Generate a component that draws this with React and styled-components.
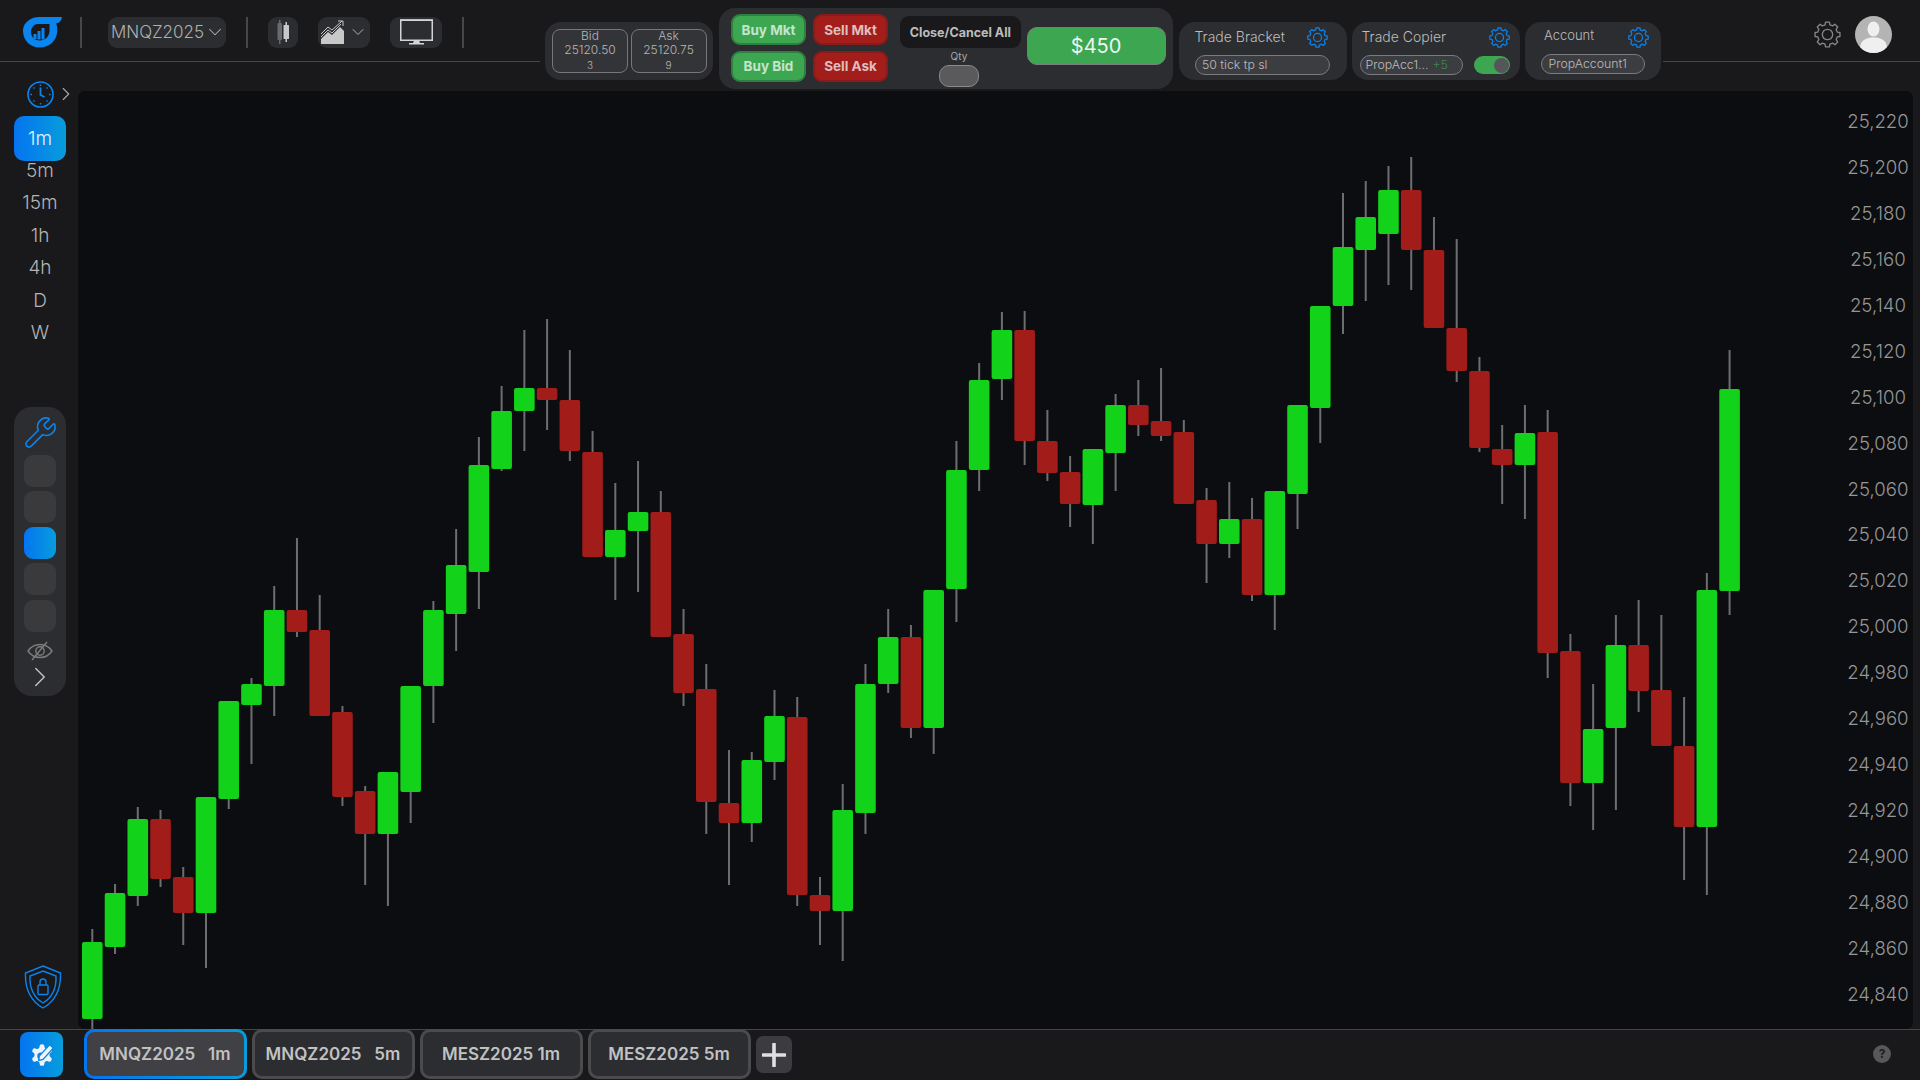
import React from 'react';
import styled, { createGlobalStyle } from 'styled-components';
import { ChevronDown, ChevronRight, Wrench } from 'lucide-react';

const BLUE = '#0a84ee';
const BLUE_FILL = 'linear-gradient(90deg, #0574f0, #079ddc)';
const PILL = '#2c2d30';
const GREEN_BTN = '#3da651';
const RED_BTN = '#a31d1b';
const FONT = 'Inter, "Open Sans", "Liberation Sans", sans-serif';

const GlobalStyle = createGlobalStyle`
  html, body { margin: 0; padding: 0; background: #19191b; }
  body { font-family: ${FONT}; color: #b8b8b8; overflow: hidden; }
  * { box-sizing: border-box; }
  svg { flex: none; }
`;

const Page = styled.div`
  width: 1920px;
  height: 1080px;
  display: grid;
  grid-template-rows: 62px 967px 51px;
`;

/* top bar */
const Header = styled.header`
  position: relative;
  z-index: 2;
  display: flex;
  align-items: flex-start;
  border-bottom: 1px solid #46464a;
`;
const LeftGroup = styled.div`
  display: flex;
  align-items: center;
  gap: 20px;
  padding: 16px 0 0 23px;
`;
const Logo = styled.svg`
  width: 39px;
  height: 32px;
  margin-right: -2px;
`;
const Divider = styled.div`
  width: 2px;
  height: 31px;
  background: #47474b;
  margin-right: ${(p) => p.$gap || 0}px;
`;
const ToolButton = styled.div`
  width: ${(p) => p.$w}px;
  height: 31px;
  padding-left: ${(p) => p.$indent || 0}px;
  background: ${PILL};
  border-radius: 9px;
  display: flex;
  align-items: center;
  justify-content: center;
  gap: ${(p) => p.$gap || 0}px;
  color: #b0b0b0;
  font-size: 17px;
  font-weight: 300;
`;
const TradeGroup = styled.div`
  margin-left: 76px;
  padding: 0 2px 0 5px;
  height: 89px;
  display: flex;
  align-items: flex-start;
  gap: 5.5px;
  background: #19191b;
`;
const SmallPill = styled.div`
  margin-top: 22px;
  height: 58px;
  background: ${PILL};
  border-radius: 16px;
`;
const BidAskPill = styled(SmallPill)`
  width: 168px;
  padding: 7px 6.5px 7px 7px;
  display: flex;
  gap: 2.5px;
`;
const Quote = styled.div`
  flex: 1;
  height: 44px;
  padding-bottom: 1px;
  border: 1px solid #77777b;
  border-radius: 8px;
  background: #333438;
  display: flex;
  flex-direction: column;
  align-items: center;
  justify-content: center;
  color: #b8b8b8;
  font-size: 12px;
  font-weight: 300;
  line-height: 14.5px;
`;
const QuoteSize = styled.span`
  font-size: 10px;
`;
const MainPill = styled.div`
  margin-top: 8px;
  width: 454.5px;
  height: 81px;
  background: ${PILL};
  border-radius: 16px;
  padding: 6px 0 0 12.5px;
  display: flex;
  align-items: flex-start;
`;
const OrderGrid = styled.div`
  display: grid;
  grid-template-columns: 75px 75px;
  grid-auto-rows: 31px;
  gap: 5.7px 7px;
`;
const OrderButton = styled.button`
  font: 700 13.5px ${FONT};
  padding: 0;
  border-radius: 9px;
  border: 2.5px solid ${(p) => (p.$buy ? '#2f7f40' : '#8a1b1a')};
  background: ${(p) => (p.$buy ? GREEN_BTN : RED_BTN)};
  color: ${(p) => (p.$buy ? '#c6e4cc' : '#dfbebe')};
`;
const CloseColumn = styled.div`
  margin: 2px 0 0 11.6px;
  width: 121.6px;
  display: flex;
  flex-direction: column;
  align-items: center;
`;
const CloseButton = styled.button`
  width: 100%;
  height: 32px;
  padding: 0;
  border: 0;
  border-radius: 9px;
  background: #19191b;
  color: #bcbcbc;
  font: 700 12.5px ${FONT};
`;
const QtyLabel = styled.div`
  margin: 1px 3px 0 0;
  height: 14px;
  font-size: 10px;
  line-height: 14px;
  color: #a8a8a8;
`;
const QtyInput = styled.div`
  margin: 2px 3px 0 0;
  width: 40px;
  height: 22px;
  border: 1px solid #8a8a8a;
  border-radius: 10px;
  background: #5a5a5c;
`;
const PriceButton = styled.button`
  margin: 12.7px 0 0 5.4px;
  width: 139px;
  height: 38px;
  padding: 0;
  border: 1px solid #7d7d7d;
  border-radius: 10px;
  background: ${GREEN_BTN};
  color: #eef6ef;
  font: 400 20px ${FONT};
`;
const PillTitle = styled.div`
  display: flex;
  align-items: center;
  justify-content: space-between;
  height: 20px;
  margin: 0 0 9px;
  font-size: 14px;
  font-weight: 300;
  color: #bdbdbd;
  padding-left: ${(p) => p.$indent || 0}px;
`;
const AccountTitle = styled(PillTitle)`
  font-size: 13px;
  margin-right: -4px;
`;
const GearSvg = styled.svg`
  width: ${(p) => p.$size}px;
  height: ${(p) => p.$size}px;
  margin-right: ${(p) => p.$right || 0}px;
  margin-top: ${(p) => p.$top || 0}px;
  color: ${(p) => p.$color};
`;
const Select = styled.div`
  height: 20px;
  border: 1px solid #7b7b7f;
  border-radius: 10px;
  background: #3c3d41;
  color: #bcbcbc;
  font-size: 12.3px;
  font-weight: 300;
  line-height: 18px;
  padding-left: 6.5px;
  white-space: nowrap;
`;
const BracketPill = styled(SmallPill)`
  width: 168px;
  padding: 4px 17px 0 16px;
`;
const CopierPill = styled(SmallPill)`
  width: 167.5px;
  padding: 4px 9.5px 0 7.5px;
`;
const AccountPill = styled(SmallPill)`
  width: 135.6px;
  padding: 3px 16px 0;
`;
const CopierRow = styled.div`
  display: flex;
  align-items: center;
  justify-content: space-between;
`;
const CopierSelect = styled(Select)`
  width: 103.5px;
  padding-left: 5px;
`;
const PlusCount = styled.span`
  margin-left: 4px;
  color: #3b8a4a;
`;
const Toggle = styled.div`
  width: 36px;
  height: 18px;
  border-radius: 9px;
  background: ${GREEN_BTN};
  padding: 1.5px;
  display: flex;
  justify-content: flex-end;
`;
const ToggleKnob = styled.div`
  width: 15px;
  height: 15px;
  border-radius: 50%;
  background: #55565a;
`;
const RightGroup = styled.div`
  margin-left: auto;
  padding: 16px 28px 0 0;
  display: flex;
  align-items: center;
  gap: 14px;
`;
const Avatar = styled.svg`
  width: 37px;
  height: 37px;
`;

/* middle */
const Main = styled.main`
  display: flex;
  min-height: 0;
`;
const Sidebar = styled.aside`
  width: 78px;
  padding: 19px 12px 20px 14px;
  display: flex;
  flex-direction: column;
`;
const ClockRow = styled.div`
  display: flex;
  align-items: center;
  gap: 1px;
  margin-left: 13px;
  height: 26px;
  color: #a8a8a8;
`;
const Timeframes = styled.div`
  margin-top: 9px;
  display: flex;
  flex-direction: column;
`;
const Timeframe = styled.div`
  height: ${(p) => (p.$active ? '44.7px' : '32.45px')};
  margin-bottom: ${(p) => (p.$active ? '-6.4px' : '0')};
  display: flex;
  align-items: center;
  justify-content: center;
  border-radius: 10px;
  font-size: 19px;
  font-weight: 300;
  color: ${(p) => (p.$active ? '#e4f1fc' : '#b4b4b4')};
  background: ${(p) => (p.$active ? BLUE_FILL : 'none')};
`;
const ToolPill = styled.div`
  margin-top: 58px;
  height: 289px;
  padding-top: 8px;
  border-radius: 18px;
  background: ${PILL};
  display: flex;
  flex-direction: column;
  align-items: center;
`;
const ToolSlots = styled.div`
  margin-top: 5px;
  display: flex;
  flex-direction: column;
  gap: 4.2px;
`;
const ToolSlot = styled.div`
  width: 32px;
  height: 32px;
  border-radius: 9px;
  background: ${(p) => (p.$active ? BLUE_FILL : '#3a3a3d')};
`;
const HideIcon = styled.svg`
  margin-top: 9px;
  width: 26px;
  height: 20px;
`;
const ToolChevron = styled(ChevronRight)`
  margin-top: -1px;
  width: 34px;
  height: 34px;
  color: #bdbdbd;
  stroke-width: 1.1;
`;
const Shield = styled.svg`
  margin: auto 0 0 10px;
  width: 38px;
  height: 44px;
`;

const ChartPanel = styled.section`
  margin: 29px 7px 0 0;
  width: 1835px;
  height: 938px;
  background: #0c0d10;
  border-radius: 7px;
  display: flex;
  overflow: hidden;
`;
const ChartCanvas = styled.svg`
  flex: none;
  width: 1765px;
  height: 938px;
`;
const PriceAxis = styled.div`
  flex: 1;
  padding-top: 8px;
  display: flex;
  flex-direction: column;
`;
const PriceLabel = styled.div`
  height: 45.95px;
  line-height: 45.95px;
  text-align: center;
  font-size: 18.6px;
  font-weight: 300;
  color: #969696;
`;

/* bottom bar */
const Footer = styled.footer`
  border-top: 1px solid #46464a;
  padding-left: 20px;
  display: flex;
  align-items: flex-start;
`;
const EditButton = styled.div`
  margin-top: 2px;
  width: 43px;
  height: 45px;
  border-radius: 8px;
  background: ${BLUE_FILL};
  display: flex;
  align-items: center;
  justify-content: center;
`;
const Tabs = styled.div`
  margin: -1px 0 0 20.5px;
  display: flex;
  gap: 5px;
`;
const Tab = styled.div`
  width: 163px;
  height: 50px;
  display: flex;
  align-items: center;
  justify-content: center;
  border-radius: 10px;
  border: 3.5px solid ${(p) => (p.$active ? 'transparent' : '#4b4b4e')};
  background: ${(p) =>
    p.$active ? `linear-gradient(#404045, #404045) padding-box, ${BLUE_FILL} border-box` : PILL};
  color: #c2c2c2;
  font-size: 17px;
  font-weight: 600;
  white-space: pre;
`;
const AddTab = styled.div`
  margin: 6px 0 0 5px;
  width: 36px;
  height: 37px;
  border-radius: 7px;
  background: #3c3c40;
  display: flex;
  align-items: center;
  justify-content: center;
`;
const HelpBadge = styled.div`
  margin: 15px 29px 0 auto;
  width: 18px;
  height: 18px;
  border-radius: 50%;
  background: #58585b;
  color: #1c1c1e;
  font-size: 12px;
  font-weight: 700;
  line-height: 18px;
  text-align: center;
`;

const TIMEFRAMES = ['1m', '5m', '15m', '1h', '4h', 'D', 'W'];
const PRICES = [
  '25,220', '25,200', '25,180', '25,160', '25,140', '25,120', '25,100', '25,080', '25,060', '25,040',
  '25,020', '25,000', '24,980', '24,960', '24,940', '24,920', '24,900', '24,880', '24,860', '24,840',
];

// [body top, body bottom, wick top, wick bottom, up] in page pixels, read off the reference
const CANDLES = [
  [942, 1019, 929, 1030, 1], [893, 947, 884, 954, 1], [819, 896, 807, 906, 1], [819, 879, 810, 887, 0],
  [877, 913, 867, 945, 0], [797, 913, 797, 968, 1], [701, 799, 701, 809, 1], [684, 705, 678, 764, 1],
  [610, 686, 586, 716, 1], [610, 632, 538, 637, 0], [630, 716, 595, 716, 0], [712, 797, 706, 806, 0],
  [791, 834, 786, 885, 0], [772, 834, 772, 906, 1], [686, 792, 686, 823, 1], [610, 686, 601, 723, 1],
  [565, 614, 529, 651, 1], [465, 572, 437, 609, 1], [411, 469, 386, 471, 1], [388, 411, 330, 451, 1],
  [388, 400, 319, 430, 0], [400, 451, 350, 461, 0], [452, 557, 431, 557, 0], [530, 557, 483, 600, 1],
  [512, 531, 461, 592, 1], [512, 637, 491, 637, 0], [634, 693, 609, 706, 0], [689, 802, 664, 834, 0],
  [803, 823, 750, 885, 0], [760, 823, 752, 842, 1], [716, 762, 690, 780, 1], [717, 895, 697, 906, 0],
  [895, 911, 877, 945, 0], [810, 911, 784, 961, 1], [684, 813, 664, 834, 1], [637, 684, 609, 693, 1],
  [637, 728, 625, 738, 0], [590, 728, 590, 754, 1], [470, 589, 441, 622, 1], [380, 470, 363, 491, 1],
  [330, 379, 312, 400, 1], [330, 441, 311, 465, 0], [441, 473, 410, 481, 0], [472, 504, 456, 527, 0],
  [449, 505, 449, 544, 1], [405, 453, 394, 491, 1], [405, 425, 380, 436, 0], [421, 436, 368, 441, 0],
  [432, 504, 420, 504, 0], [500, 544, 488, 583, 0], [519, 544, 482, 558, 1], [519, 595, 498, 601, 0],
  [491, 595, 491, 630, 1], [405, 494, 405, 529, 1], [306, 408, 306, 443, 1], [247, 306, 193, 334, 1],
  [217, 250, 181, 301, 1], [190, 234, 166, 285, 1], [190, 250, 157, 290, 0], [250, 328, 217, 328, 0],
  [328, 371, 239, 382, 0], [371, 448, 357, 452, 0], [449, 465, 425, 504, 0], [433, 465, 405, 519, 1],
  [432, 653, 410, 678, 0], [651, 783, 634, 806, 0], [729, 783, 684, 830, 1], [645, 728, 615, 810, 1],
  [645, 691, 600, 712, 0], [690, 746, 615, 746, 0], [746, 827, 697, 880, 0], [590, 827, 573, 895, 1],
  [389, 591, 350, 615, 1],
];

// eight tooth outline for the cog icons
const GEAR_PATH = Array.from({ length: 8 }, (_, k) => {
  const base = (k * Math.PI) / 4;
  const point = (r, deg) => {
    const a = base + (deg * Math.PI) / 180;
    return `${(12 + r * Math.cos(a)).toFixed(2)} ${(12 + r * Math.sin(a)).toFixed(2)}`;
  };
  return `${k === 0 ? 'M' : 'L'}${point(8.9, -14)}L${point(11.2, -9)}L${point(11.2, 9)}L${point(8.9, 14)}`;
}).join('') + 'Z';

const Gear = ({ size, color, right, top, weight = 1.4 }) => (
  <GearSvg viewBox="0 0 24 24" $size={size} $color={color} $right={right} $top={top} fill="none" stroke="currentColor" strokeWidth={weight} strokeLinejoin="round">
    <path d={GEAR_PATH} />
    <circle cx="12" cy="12" r="4.6" />
  </GearSvg>
);

const Chart = () => (
  <ChartCanvas viewBox="78 91 1765 938">
    {CANDLES.map(([top, bottom, wickTop, wickBottom, up], i) => {
      const x = 92.3 + i * 22.74;
      return (
        <g key={i}>
          <rect x={x - 1} y={wickTop} width="2" height={wickBottom - wickTop} fill="#6e6e70" />
          <rect x={x - 10.3} y={top} width="20.6" height={bottom - top} rx="2" fill={up ? '#12d319' : '#a21c1a'} />
        </g>
      );
    })}
  </ChartCanvas>
);

const LogoMark = () => (
  <Logo viewBox="0 0 39 32">
    <path
      fill={BLUE}
      fillRule="evenodd"
      d="M7 3.5C9 2 12 1 16 1H39C38.5 4.5 36.5 7 33 7.5C34 9 34.5 12 34.2 16C33.5 25 26 31.5 17 31.5C7 31.5 0 24 0 15C0 10 2.5 6 7 3.5ZM14 8C10 9 8 12 8 16C8 21 12 24.5 17 24.5C22 24.5 26 21 26.5 15V8Z"
    />
    <rect x="10.5" y="18" width="3" height="5" fill={BLUE} />
    <rect x="14.5" y="15" width="3" height="8.5" fill={BLUE} />
    <rect x="18.5" y="12" width="3" height="11.5" fill={BLUE} />
  </Logo>
);

const CandleIcon = () => (
  <svg width="14" height="24" viewBox="0 0 14 24">
    <rect x="3" y="0" width="1.5" height="24" fill="#6a6a6c" />
    <rect x="1.5" y="3" width="4.5" height="17" rx="1" fill="#6a6a6c" />
    <rect x="9.5" y="2" width="1.5" height="20" fill="#c8c8c8" />
    <rect x="7.5" y="5" width="5.5" height="14" rx="0.5" fill="#c8c8c8" />
  </svg>
);

const AreaIcon = () => (
  <svg width="24" height="25" viewBox="0 0 24 25">
    <path d="M0 24V19L7 12L11 15L19 7L23 11V24Z" fill="#c8c8c8" />
    <path d="M0 14L7 7L11 10L21 1" fill="none" stroke="#c8c8c8" strokeWidth="1" />
    <path d="M0 17L7 10L11 13L20 4" fill="none" stroke="#c8c8c8" strokeWidth="1" />
    <path d="M17 1H22V6" fill="none" stroke="#c8c8c8" strokeWidth="1" />
  </svg>
);

const MonitorIcon = () => (
  <svg width="33" height="26" viewBox="0 0 33 26">
    <rect x="0.75" y="1.25" width="31.5" height="20" fill="none" stroke="#d4d4d4" strokeWidth="1.5" />
    <path d="M0 1H33" stroke="#d4d4d4" strokeWidth="1.5" />
    <path d="M14 21.5H19L20 24H24V25.5H9V24H13Z" fill="#d4d4d4" />
  </svg>
);

const ClockIcon = () => (
  <svg width="27" height="27" viewBox="0 0 27 27" fill="none" stroke={BLUE}>
    <circle cx="13.5" cy="13.5" r="12.5" strokeWidth="1.6" />
    <path d="M13.5 6.5V14L17.5 16" strokeWidth="1.8" />
    <path
      d="M13.5 3.5V5M13.5 22V23.5M3.5 13.5H5M22 13.5H23.5M6.5 6.5L7.5 7.5M19.5 19.5L20.5 20.5M20.5 6.5L19.5 7.5M7.5 19.5L6.5 20.5"
      strokeWidth="1.4"
    />
  </svg>
);

const EyeSlash = () => (
  <HideIcon viewBox="0 0 26 20" fill="none" stroke="#7c7c7c" strokeWidth="1.4">
    <path d="M1 10C4 5.5 8 3.5 13 3.5S22 5.5 25 10C22 14.5 18 16.5 13 16.5S4 14.5 1 10Z" />
    <circle cx="13" cy="10" r="4.2" />
    <path d="M5 19L20 1" />
  </HideIcon>
);

const ShieldIcon = () => (
  <Shield viewBox="0 0 38 44" fill="none" stroke={BLUE} strokeWidth="1.4">
    <path d="M19 1L36.5 8C37 22 33 35 19 43C5 35 1 22 1.5 8Z" />
    <path d="M19 6L32 11C32.5 22 29 32 19 38C9 32 5.5 22 6 11Z" />
    <rect x="14" y="20" width="10" height="9.5" rx="1" />
    <path d="M16 20V17C16 13 22 13 22 17V20" />
  </Shield>
);

const EditIcon = () => (
  <svg width="26" height="26" viewBox="0 0 24 24">
    <path
      fill="#eef4fa"
      d="M12.22 2h-.44a2 2 0 0 0-2 2v.18a2 2 0 0 1-1 1.73l-.43.25a2 2 0 0 1-2 0l-.15-.08a2 2 0 0 0-2.73.73l-.22.38a2 2 0 0 0 .73 2.73l.15.1a2 2 0 0 1 1 1.72v.51a2 2 0 0 1-1 1.74l-.15.09a2 2 0 0 0-.73 2.73l.22.38a2 2 0 0 0 2.73.73l.15-.08a2 2 0 0 1 2 0l.43.25a2 2 0 0 1 1 1.73V20a2 2 0 0 0 2 2h.44a2 2 0 0 0 2-2v-.18a2 2 0 0 1 1-1.73l.43-.25a2 2 0 0 1 2 0l.15.08a2 2 0 0 0 2.73-.73l.22-.39a2 2 0 0 0-.73-2.73l-.15-.08a2 2 0 0 1-1-1.74v-.5a2 2 0 0 1 1-1.74l.15-.09a2 2 0 0 0 .73-2.73l-.22-.38a2 2 0 0 0-2.73-.73l-.15.08a2 2 0 0 1-2 0l-.43-.25a2 2 0 0 1-1-1.73V4a2 2 0 0 0-2-2z"
    />
    <circle cx="11" cy="13" r="3.4" fill="#0a86e8" />
    <path d="M9.5 13L19 2.5L22.5 5.5L13 16L9 17Z" fill="#eef4fa" stroke="#0a86e8" strokeWidth="1.2" />
  </svg>
);

const PlusIcon = () => (
  <svg width="24" height="24" viewBox="0 0 24 24">
    <path d="M12 1V23M1 12H23" stroke="#e0e0e0" strokeWidth="3.6" strokeLinecap="round" />
  </svg>
);

const App = () => (
  <Page>
    <GlobalStyle />
    <Header>
      <LeftGroup>
        <LogoMark />
        <Divider $gap={6} />
        <ToolButton $w={118} $indent={3}>
          MNQZ2025
          <ChevronDown size={22} strokeWidth={1.1} />
        </ToolButton>
        <Divider />
        <ToolButton $w={30}>
          <CandleIcon />
        </ToolButton>
        <ToolButton $w={52} $gap={3}>
          <AreaIcon />
          <ChevronDown size={20} strokeWidth={1.2} />
        </ToolButton>
        <ToolButton $w={52}>
          <MonitorIcon />
        </ToolButton>
        <Divider />
      </LeftGroup>
      <TradeGroup>
        <BidAskPill>
          <Quote>
            <span>Bid</span>
            <span>25120.50</span>
            <QuoteSize>3</QuoteSize>
          </Quote>
          <Quote>
            <span>Ask</span>
            <span>25120.75</span>
            <QuoteSize>9</QuoteSize>
          </Quote>
        </BidAskPill>
        <MainPill>
          <OrderGrid>
            <OrderButton $buy>Buy Mkt</OrderButton>
            <OrderButton>Sell Mkt</OrderButton>
            <OrderButton $buy>Buy Bid</OrderButton>
            <OrderButton>Sell Ask</OrderButton>
          </OrderGrid>
          <CloseColumn>
            <CloseButton>Close/Cancel All</CloseButton>
            <QtyLabel>Qty</QtyLabel>
            <QtyInput />
          </CloseColumn>
          <PriceButton>$450</PriceButton>
        </MainPill>
        <BracketPill>
          <PillTitle>
            Trade Bracket <Gear size={21} color={BLUE} right={2} top={2} />
          </PillTitle>
          <Select>50 tick tp sl</Select>
        </BracketPill>
        <CopierPill>
          <PillTitle $indent={2}>
            Trade Copier <Gear size={21} color={BLUE} top={2} />
          </PillTitle>
          <CopierRow>
            <CopierSelect>
              PropAcc1...<PlusCount>+5</PlusCount>
            </CopierSelect>
            <Toggle>
              <ToggleKnob />
            </Toggle>
          </CopierRow>
        </CopierPill>
        <AccountPill>
          <AccountTitle $indent={3}>
            Account <Gear size={21} color={BLUE} top={4} />
          </AccountTitle>
          <Select>PropAccount1</Select>
        </AccountPill>
      </TradeGroup>
      <RightGroup>
        <Gear size={27} color="#858585" weight={1.2} top={-1} />
        <Avatar viewBox="0 0 37 37">
          <circle cx="18.5" cy="18.5" r="18.5" fill="#b4b4b4" />
          <ellipse cx="18.5" cy="13" rx="6" ry="7.5" fill="#efefef" />
          <path d="M5 31C6 24 11 21.5 18.5 21.5S31 24 32 31C28.5 35 24 37 18.5 37S8.5 35 5 31Z" fill="#efefef" />
        </Avatar>
      </RightGroup>
    </Header>

    <Main>
      <Sidebar>
        <ClockRow>
          <ClockIcon />
          <ChevronRight size={22} strokeWidth={1.2} />
        </ClockRow>
        <Timeframes>
          {TIMEFRAMES.map((tf) => (
            <Timeframe key={tf} $active={tf === '1m'}>
              {tf}
            </Timeframe>
          ))}
        </Timeframes>
        <ToolPill>
          <Wrench size={35} color={BLUE} strokeWidth={1.1} />
          <ToolSlots>
            {[0, 1, 2, 3, 4].map((n) => (
              <ToolSlot key={n} $active={n === 2} />
            ))}
          </ToolSlots>
          <EyeSlash />
          <ToolChevron />
        </ToolPill>
        <ShieldIcon />
      </Sidebar>
      <ChartPanel>
        <Chart />
        <PriceAxis>
          {PRICES.map((price) => (
            <PriceLabel key={price}>{price}</PriceLabel>
          ))}
        </PriceAxis>
      </ChartPanel>
    </Main>

    <Footer>
      <EditButton>
        <EditIcon />
      </EditButton>
      <Tabs>
        <Tab $active>{'MNQZ2025   1m'}</Tab>
        <Tab>{'MNQZ2025   5m'}</Tab>
        <Tab>MESZ2025 1m</Tab>
        <Tab>MESZ2025 5m</Tab>
      </Tabs>
      <AddTab>
        <PlusIcon />
      </AddTab>
      <HelpBadge>?</HelpBadge>
    </Footer>
  </Page>
);

export default App;
